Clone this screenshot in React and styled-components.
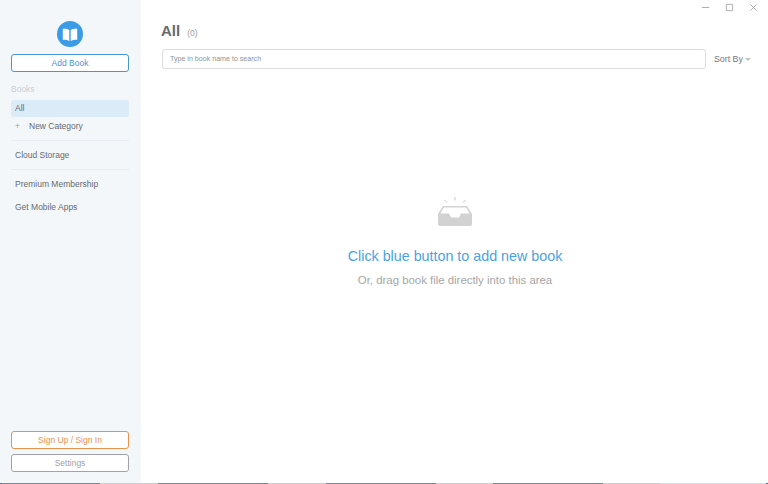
import React from "react";
import styled, { createGlobalStyle } from "styled-components";

const GlobalStyle = createGlobalStyle`
  html, body {
    margin: 0;
    padding: 0;
    background: #fff;
  }
  body {
    font-family: "Liberation Sans", Arial, sans-serif;
  }
`;

const TASKBAR = [
  ["#3f78a8", 2],
  ["#6f8ba3", 98],
  ["#c9ccd0", 58],
  ["#6f8ba3", 110],
  ["#c9ccd0", 58],
  ["#6f8ba3", 110],
  ["#c9ccd0", 57],
  ["#6f8ba3", 110],
  ["#c9ccd0", 57],
  ["#cfe0ee", 106],
  ["#3f78a8", 2],
];

const BookLogo = () => (
  <LogoSvg viewBox="0 0 26 26">
    <circle cx="13" cy="13" r="13" fill="#3b9be6" />
    <path
      d="M12.3 9C10.6 7.8 8.2 7.5 5.8 7.7v11c2.4-.1 4.8.2 6.5 1.3z"
      fill="#fff"
    />
    <path
      d="M13.7 9c1.7-1.2 4.1-1.5 6.5-1.3v11c-2.4-.1-4.8.2-6.5 1.3z"
      fill="#fff"
    />
  </LogoSvg>
);

const EmptyTray = () => (
  <TraySvg viewBox="0 0 36 30">
    <path
      d="M10 6.5 7.5 4M18 4.5V1M26 6.5 28.5 4"
      stroke="#c9c9c9"
      strokeWidth="1"
      fill="none"
    />
    <path
      d="M6 10h24l5 8v10a2 2 0 0 1-2 2H3a2 2 0 0 1-2-2V18z"
      fill="#d2d2d2"
    />
    <path
      d="M6.8 11.5h22.4l3.4 6H24l-2 4h-8l-2-4H3.4z"
      fill="#fff"
    />
  </TraySvg>
);

export default function App() {
  return (
    <Page>
      <GlobalStyle />
      <Body>
        <Sidebar>
          <BookLogo />
          <OutlineButton $tone="blue">Add Book</OutlineButton>
          <SectionLabel>Books</SectionLabel>
          <NavItem $active>All</NavItem>
          <NavItem $offset="1px">
            <Plus>+</Plus>New Category
          </NavItem>
          <Divider />
          <NavItem>Cloud Storage</NavItem>
          <Divider />
          <NavItem>Premium Membership</NavItem>
          <NavItem $offset="6px">Get Mobile Apps</NavItem>
          <SidebarFooter>
            <OutlineButton $tone="orange">Sign Up / Sign In</OutlineButton>
            <OutlineButton $tone="gray">Settings</OutlineButton>
          </SidebarFooter>
        </Sidebar>
        <Main>
          <WindowControls>
            <WindowIcon viewBox="0 0 10 10">
              <path d="M1 5h8" />
            </WindowIcon>
            <WindowIcon viewBox="0 0 10 10">
              <path d="M1.5 1.5h7v7h-7z" />
            </WindowIcon>
            <WindowIcon viewBox="0 0 10 10">
              <path d="M1.5 1.5l7 7M8.5 1.5l-7 7" />
            </WindowIcon>
          </WindowControls>
          <TitleRow>
            <Title>All</Title>
            <Count>(0)</Count>
          </TitleRow>
          <SearchRow>
            <SearchInput placeholder="Type in book name to search" />
            <SortBy>
              Sort By<Caret />
            </SortBy>
          </SearchRow>
          <Empty>
            <EmptyTray />
            <EmptyTitle>Click blue button to add new book</EmptyTitle>
            <EmptyHint>Or, drag book file directly into this area</EmptyHint>
          </Empty>
        </Main>
      </Body>
      <Taskbar>
        {TASKBAR.map(([color, width], i) => (
          <TaskbarSegment key={i} $color={color} $width={width} />
        ))}
      </Taskbar>
    </Page>
  );
}

const Page = styled.div`
  width: 768px;
  height: 484px;
  display: flex;
  flex-direction: column;
  overflow: hidden;
  background: #fff;
`;

const Body = styled.div`
  flex: 1;
  min-height: 0;
  display: flex;
`;

const Sidebar = styled.aside`
  width: 141px;
  box-sizing: border-box;
  padding: 21px 12px 11px 11px;
  display: flex;
  flex-direction: column;
  background: #f4f7fa;
`;

const LogoSvg = styled.svg`
  display: block;
  flex: none;
  width: 26px;
  height: 26px;
  margin: 0 auto 7px;
`;

const TONES = {
  blue: "#4a96d3",
  orange: "#e8934c",
  gray: "#9fa3a9",
};

const OutlineButton = styled.button`
  display: block;
  flex: none;
  width: 100%;
  height: 18px;
  padding: 0;
  box-sizing: border-box;
  background: #fff;
  border: 1px solid ${(p) => TONES[p.$tone]};
  border-radius: 3px;
  color: ${(p) => TONES[p.$tone]};
  font-family: inherit;
  font-size: 8.5px;
  line-height: 16px;
  text-align: center;
`;

const SectionLabel = styled.div`
  margin-top: 11px;
  height: 12px;
  font-size: 8.5px;
  line-height: 12px;
  color: #cbced2;
`;

const NavItem = styled.div`
  flex: none;
  height: 17px;
  margin-top: ${(p) => (p.$active ? "5px" : p.$offset || "0")};
  padding-left: 4px;
  border-radius: 2px;
  background: ${(p) => (p.$active ? "#dcebf8" : "transparent")};
  color: #666a70;
  font-size: 8.5px;
  line-height: 17px;
  white-space: nowrap;
`;

const Plus = styled.span`
  display: inline-block;
  width: 14px;
  color: #9a9ea3;
`;

const Divider = styled.div`
  flex: none;
  height: 1px;
  margin: 5px 0 6px;
  background: #e9edf1;
`;

const SidebarFooter = styled.div`
  margin-top: auto;
  display: flex;
  flex-direction: column;
  gap: 5px;
`;

const Main = styled.main`
  flex: 1;
  min-width: 0;
  position: relative;
  padding: 22px 20px 0 21px;
  display: flex;
  flex-direction: column;
`;

const WindowControls = styled.div`
  position: absolute;
  top: 3px;
  right: 10px;
  display: flex;
  gap: 15px;
`;

const WindowIcon = styled.svg`
  width: 9px;
  height: 9px;
  fill: none;
  stroke: #a6a6a6;
  stroke-width: 1;
`;

const TitleRow = styled.div`
  display: flex;
  align-items: baseline;
  height: 18px;
`;

const Title = styled.h1`
  margin: 0 0 0 -1px;
  font-size: 15px;
  line-height: 18px;
  font-weight: 700;
  color: #666a6e;
`;

const Count = styled.span`
  margin-left: 7px;
  font-size: 8.5px;
  color: #a0a0a0;
`;

const SearchRow = styled.div`
  margin-top: 9px;
  display: flex;
  align-items: center;
`;

const SearchInput = styled.input`
  flex: none;
  width: 544px;
  height: 20px;
  box-sizing: border-box;
  padding: 0 7px;
  border: 1px solid #dcdcdc;
  border-radius: 3px;
  background: #fff;
  outline: none;
  font-family: inherit;
  font-size: 7.1px;

  &::placeholder {
    color: #8f9295;
    opacity: 1;
  }
`;

const SortBy = styled.div`
  margin-left: 8px;
  display: flex;
  align-items: center;
  font-size: 8.8px;
  white-space: nowrap;
  color: #75787c;
`;

const Caret = styled.span`
  margin-left: 2px;
  width: 0;
  height: 0;
  border-left: 3px solid transparent;
  border-right: 3px solid transparent;
  border-top: 3px solid #c0c0c0;
`;

const Empty = styled.div`
  margin-top: 127px;
  display: flex;
  flex-direction: column;
  align-items: center;
`;

const TraySvg = styled.svg`
  display: block;
  flex: none;
  width: 36px;
  height: 30px;
  fill: none;
`;

const EmptyTitle = styled.div`
  margin-top: 21px;
  font-size: 14.3px;
  line-height: 18px;
  white-space: nowrap;
  color: #4aa3df;
`;

const EmptyHint = styled.div`
  margin-top: 8px;
  font-size: 11.4px;
  line-height: 14px;
  white-space: nowrap;
  color: #a6a6a6;
`;

const Taskbar = styled.div`
  flex: none;
  height: 1px;
  display: flex;
`;

const TaskbarSegment = styled.div`
  flex: none;
  height: 1px;
  width: ${(p) => p.$width}px;
  background: ${(p) => p.$color};
`;
